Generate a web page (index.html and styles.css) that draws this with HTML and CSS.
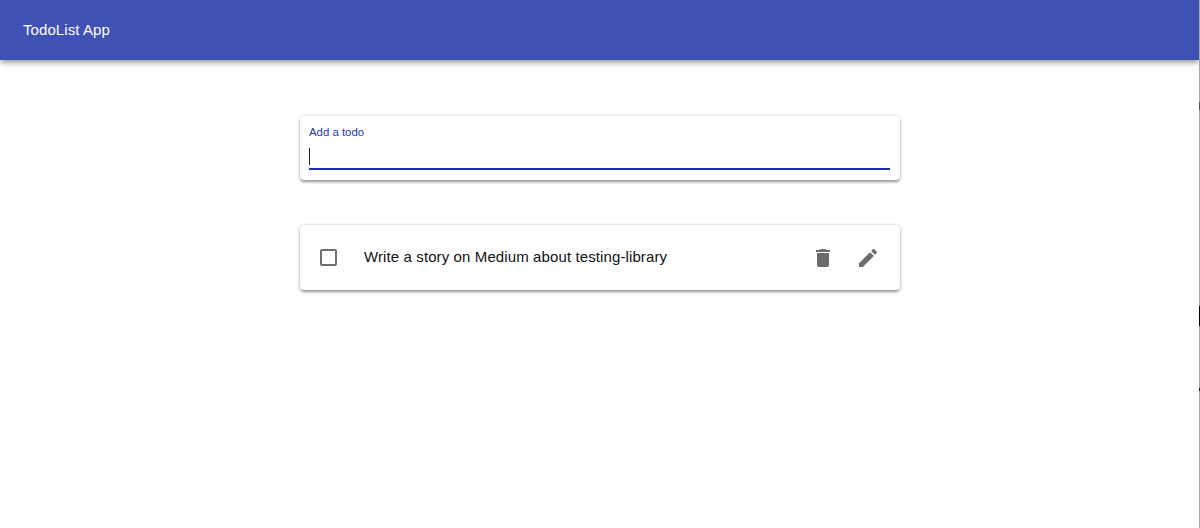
FILE: index.html
```html
<!DOCTYPE html>
<html lang="en">
<head>
<meta charset="utf-8">
<title>TodoList App</title>
<link rel="stylesheet" href="styles.css">
</head>
<body>
<div class="page">
  <header class="appbar"><h1 class="title">TodoList App</h1></header>
  <main class="content">
    <section class="card add-card">
      <label class="field-label" for="todo">Add a todo</label>
      <div class="field"><span class="caret"></span><input id="todo" class="field-input" type="text" aria-label="Add a todo"></div>
    </section>
    <section class="card todo-card">
      <span class="checkbox"></span>
      <span class="todo-text">Write a story on Medium about testing-library</span>
      <span class="actions">
        <svg class="icon" viewBox="0 0 24 24" aria-hidden="true"><path d="M6 19c0 1.1.9 2 2 2h8c1.1 0 2-.9 2-2V7H6v12zM19 4h-3.5l-1-1h-5l-1 1H5v2h14V4z"/></svg>
        <svg class="icon" viewBox="0 0 24 24" aria-hidden="true"><path d="M3 17.25V21h3.75L17.81 9.94l-3.75-3.75L3 17.25zM20.71 7.04a1 1 0 0 0 0-1.41l-2.34-2.34a1 1 0 0 0-1.41 0l-1.83 1.83 3.75 3.75 1.83-1.83z"/></svg>
      </span>
    </section>
  </main>
</div>
<div class="edge"></div>
</body>
</html>
```
FILE: styles.css
```css
html, body {
  margin: 0;
  height: 100%;
  background: #fff;
}
body {
  display: flex;
  overflow: hidden;
  font-family: "Liberation Sans", Arial, sans-serif;
}
.page {
  flex: 1;
  min-width: 0;
}
.edge {
  width: 1px;
  background: linear-gradient(to bottom,
    #a8a8a8 102px, #555 102px, #555 110px,
    #a8a8a8 110px, #a8a8a8 306px, #000 306px, #000 326px,
    #a8a8a8 326px, #a8a8a8 388px, #111 388px, #111 391px,
    #a8a8a8 391px);
}
.appbar {
  height: 60px;
  box-sizing: border-box;
  display: flex;
  align-items: center;
  padding: 0 23px 2px;
  background: #3f51b5;
  box-shadow: 0 2px 4px -1px rgba(0,0,0,.25), 0 4px 5px 0 rgba(0,0,0,.16), 0 1px 10px 0 rgba(0,0,0,.12);
}
.title {
  margin: 0;
  font-size: 15px;
  font-weight: 400;
  letter-spacing: .08px;
  color: #fff;
}
.content {
  width: 600px;
  margin: 56px auto 0 300px;
  display: flex;
  flex-direction: column;
  gap: 45px;
}
.card {
  background: #fff;
  border-radius: 4px;
  box-shadow: 0 3px 3px -1px rgba(0,0,0,.3), 0 1px 4px 0 rgba(0,0,0,.2), 0 0 3px 0 rgba(0,0,0,.1);
}
.add-card {
  height: 64px;
  box-sizing: border-box;
  padding: 10px 10px 0 9px;
}
.field-label {
  display: block;
  font-size: 11.4px;
  line-height: 13px;
  color: #1f35b0;
}
.field {
  height: 24px;
  margin-top: 5px;
  display: flex;
  align-items: center;
  border-bottom: 2px solid #1a2fa8;
}
.caret {
  width: 1px;
  height: 17px;
  background: #222;
}
.field-input {
  flex: 1;
  border: 0;
  outline: 0;
  padding: 0;
  background: transparent;
}
.todo-card {
  height: 65px;
  display: flex;
  align-items: center;
  padding: 0 20px;
}
.checkbox {
  width: 13px;
  height: 13px;
  border: 2px solid #6e6e6e;
  border-radius: 2px;
}
.todo-text {
  flex: 1;
  margin: 0 0 2px 27px;
  font-size: 15px;
  letter-spacing: .11px;
  color: #111;
}
.actions {
  display: flex;
  gap: 21px;
}
.icon {
  width: 24px;
  height: 24px;
  fill: #6b6b6b;
}
```
